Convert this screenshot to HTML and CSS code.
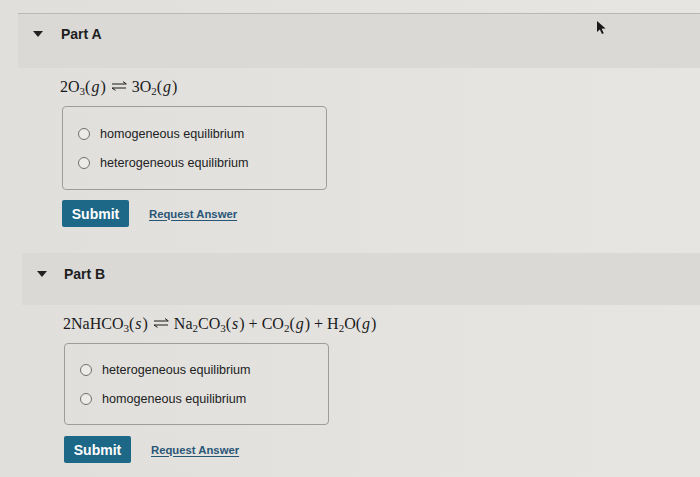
FILE: index.html
```html
<!DOCTYPE html>
<html>
<head>
<meta charset="utf-8">
<link rel="stylesheet" href="styles.css">
</head>
<body>
<div class="page">
  <div class="strip"></div>
  <section class="part part-a">
    <div class="part-head">
      <span class="caret"></span>
      <span class="part-title">Part A</span>
    </div>
    <div class="part-body">
      <div class="eq">2O<sub>3</sub>(<i>g</i>)<svg class="arr" width="17" height="10" viewBox="0 0 17 10"><path d="M1 3 H15 M12 0.6 L15.5 3 M1 7 H15 M4.5 9.4 L1 7" stroke="#1a1a1a" stroke-width="1" fill="none"/></svg>3O<sub>2</sub>(<i>g</i>)</div>
      <div class="choices">
        <label class="choice"><span class="radio"></span>homogeneous equilibrium</label>
        <label class="choice"><span class="radio"></span>heterogeneous equilibrium</label>
      </div>
      <div class="actions">
        <button class="submit">Submit</button>
        <a class="request">Request Answer</a>
      </div>
    </div>
  </section>
  <section class="part part-b">
    <div class="part-head">
      <span class="caret"></span>
      <span class="part-title">Part B</span>
    </div>
    <div class="part-body">
      <div class="eq">2NaHCO<sub>3</sub>(<i>s</i>)<svg class="arr" width="17" height="10" viewBox="0 0 17 10"><path d="M1 3 H15 M12 0.6 L15.5 3 M1 7 H15 M4.5 9.4 L1 7" stroke="#1a1a1a" stroke-width="1" fill="none"/></svg>Na<sub>2</sub>CO<sub>3</sub>(<i>s</i>)<span class="op">+</span>CO<sub>2</sub>(<i>g</i>)<span class="op">+</span>H<sub>2</sub>O(<i>g</i>)</div>
      <div class="choices">
        <label class="choice"><span class="radio"></span>heterogeneous equilibrium</label>
        <label class="choice"><span class="radio"></span>homogeneous equilibrium</label>
      </div>
      <div class="actions">
        <button class="submit">Submit</button>
        <a class="request">Request Answer</a>
      </div>
    </div>
  </section>
  <svg class="cursor" width="12" height="16" viewBox="0 0 12 16"><path d="M1 1 L1 12 L3.8 9.4 L6 14 L7.8 13.2 L5.6 8.8 L9.6 8.6 Z" fill="#1a1a1a"/></svg>
</div>
</body>
</html>
```

FILE: styles.css
```css
html, body {
  margin: 0;
  padding: 0;
}
body {
  background: #e3e2df;
  font-family: "Liberation Sans", Arial, sans-serif;
  color: #222;
}
.page {
  position: relative;
  width: 700px;
  height: 477px;
  overflow: hidden;
  background: linear-gradient(90deg, #e0dfdc 0%, #e4e3e0 60%, #e6e5e2 100%);
}
.strip {
  height: 13px;
}
.part-head {
  display: flex;
  align-items: center;
  background: #dad9d6;
}
.part-a .part-head {
  margin-left: 18px;
  height: 55px;
  border-top: 1px solid #b9b8b5;
  padding-left: 15px;
  padding-bottom: 14px;
  box-sizing: border-box;
}
.part-b .part-head {
  margin-left: 22px;
  margin-top: 26px;
  height: 52px;
  padding-left: 15px;
  padding-bottom: 10px;
  box-sizing: border-box;
}
.caret {
  width: 0;
  height: 0;
  border-left: 5px solid transparent;
  border-right: 5px solid transparent;
  border-top: 6px solid #222;
  margin-right: 18px;
}
.part-b .caret { margin-right: 17px; }
.part-title {
  font-weight: bold;
  font-size: 14px;
  color: #1e1e1e;
}
.part-a .part-body { padding-left: 60px; }
.part-b .part-body { padding-left: 63px; }
.eq {
  font-family: "Liberation Serif", "Times New Roman", serif;
  font-size: 16px;
  line-height: 20px;
  height: 20px;
  margin-top: 9px;
  color: #1a1a1a;
  white-space: nowrap;
}
.eq i {
  padding: 0 1px;
}
.eq sub {
  font-size: 11px;
  vertical-align: -3px;
  line-height: 0;
}
.eq .arr {
  margin: 0 4px 0 5px;
  vertical-align: 1px;
}
.eq .op {
  margin: 0 4px;
}
.choices {
  margin-top: 9px;
  width: 265px;
  box-sizing: border-box;
  border: 1px solid #9e9d9a;
  border-radius: 4px;
  padding: 17px 0 16px 15px;
  display: flex;
  flex-direction: column;
  gap: 10px;
}
.part-a .choices { margin-left: 2px; height: 84px; }
.part-b .choices { margin-left: 1px; height: 82px; padding-top: 16px; }
.choice {
  display: flex;
  align-items: center;
  height: 20px;
  font-size: 12.6px;
  color: #222;
}
.radio {
  width: 10px;
  height: 10px;
  border: 1.5px solid #707070;
  border-radius: 50%;
  margin-right: 10px;
  background: #ecebe8;
}
.actions {
  display: flex;
  align-items: center;
  margin-top: 10px;
  gap: 20px;
}
.part-a .actions { margin-left: 2px; }
.part-b .actions { margin-left: 1px; margin-top: 11px; }
.submit {
  width: 67px;
  height: 27px;
  border: none;
  border-radius: 2px;
  background: #1d6787;
  color: #fff;
  font-family: "Liberation Sans", Arial, sans-serif;
  font-weight: bold;
  font-size: 14px;
  padding: 0;
}
.request {
  font-size: 11.3px;
  font-weight: bold;
  color: #2a5676;
  text-decoration: underline;
  text-underline-offset: 2px;
}
.cursor {
  position: absolute;
  left: 596px;
  top: 20px;
}
```
